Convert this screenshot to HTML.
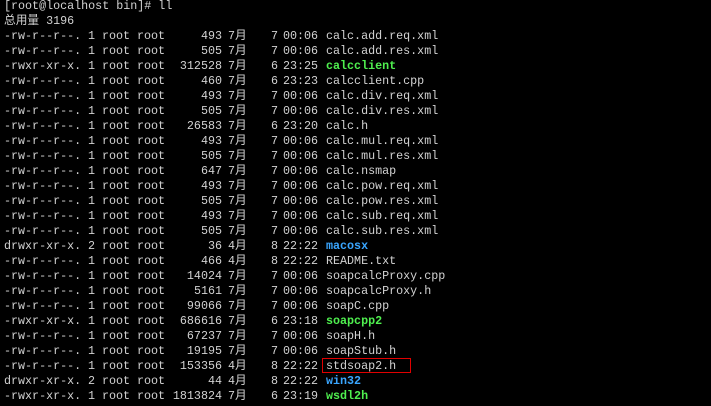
<!DOCTYPE html><html><head><meta charset="utf-8"><style>
body{margin:0;background:#000;width:711px;height:403px;overflow:hidden;position:relative;font-family:"Liberation Mono","Noto Sans CJK SC",monospace;font-size:11.7px;color:#d2d2d2}
.w{position:absolute;left:0;top:3px;width:711px;height:403px}
.r{position:absolute;left:0;height:15px;line-height:15px;width:711px;white-space:pre}
.r span{position:absolute;top:0}
.p{left:4px}.l{left:88px}.u{left:102px}.g{left:137px}
.s{right:489px;text-align:right}
.m{left:228px}.d{right:433px}.t{left:283px}.n{left:326px}
.gr{color:#4ff04f;font-weight:bold}.bl{color:#3aa6ff;font-weight:bold}
.box{position:absolute;left:322px;top:355px;width:87px;height:13px;border:1px solid #e00000}
</style></head><body><div class="w">
<div class="r" style="top:-4px"><span class="p">[root@localhost bin]# ll</span></div>
<div class="r" style="top:11px"><span class="p">总用量 3196</span></div>
<div class="r" style="top:26px"><span class="p">-rw-r--r--.</span><span class="l">1</span><span class="u">root</span><span class="g">root</span><span class="s">493</span><span class="m">7月</span><span class="d">7</span><span class="t">00:06</span><span class="n">calc.add.req.xml</span></div>
<div class="r" style="top:41px"><span class="p">-rw-r--r--.</span><span class="l">1</span><span class="u">root</span><span class="g">root</span><span class="s">505</span><span class="m">7月</span><span class="d">7</span><span class="t">00:06</span><span class="n">calc.add.res.xml</span></div>
<div class="r" style="top:56px"><span class="p">-rwxr-xr-x.</span><span class="l">1</span><span class="u">root</span><span class="g">root</span><span class="s">312528</span><span class="m">7月</span><span class="d">6</span><span class="t">23:25</span><span class="n gr">calcclient</span></div>
<div class="r" style="top:71px"><span class="p">-rw-r--r--.</span><span class="l">1</span><span class="u">root</span><span class="g">root</span><span class="s">460</span><span class="m">7月</span><span class="d">6</span><span class="t">23:23</span><span class="n">calcclient.cpp</span></div>
<div class="r" style="top:86px"><span class="p">-rw-r--r--.</span><span class="l">1</span><span class="u">root</span><span class="g">root</span><span class="s">493</span><span class="m">7月</span><span class="d">7</span><span class="t">00:06</span><span class="n">calc.div.req.xml</span></div>
<div class="r" style="top:101px"><span class="p">-rw-r--r--.</span><span class="l">1</span><span class="u">root</span><span class="g">root</span><span class="s">505</span><span class="m">7月</span><span class="d">7</span><span class="t">00:06</span><span class="n">calc.div.res.xml</span></div>
<div class="r" style="top:116px"><span class="p">-rw-r--r--.</span><span class="l">1</span><span class="u">root</span><span class="g">root</span><span class="s">26583</span><span class="m">7月</span><span class="d">6</span><span class="t">23:20</span><span class="n">calc.h</span></div>
<div class="r" style="top:131px"><span class="p">-rw-r--r--.</span><span class="l">1</span><span class="u">root</span><span class="g">root</span><span class="s">493</span><span class="m">7月</span><span class="d">7</span><span class="t">00:06</span><span class="n">calc.mul.req.xml</span></div>
<div class="r" style="top:146px"><span class="p">-rw-r--r--.</span><span class="l">1</span><span class="u">root</span><span class="g">root</span><span class="s">505</span><span class="m">7月</span><span class="d">7</span><span class="t">00:06</span><span class="n">calc.mul.res.xml</span></div>
<div class="r" style="top:161px"><span class="p">-rw-r--r--.</span><span class="l">1</span><span class="u">root</span><span class="g">root</span><span class="s">647</span><span class="m">7月</span><span class="d">7</span><span class="t">00:06</span><span class="n">calc.nsmap</span></div>
<div class="r" style="top:176px"><span class="p">-rw-r--r--.</span><span class="l">1</span><span class="u">root</span><span class="g">root</span><span class="s">493</span><span class="m">7月</span><span class="d">7</span><span class="t">00:06</span><span class="n">calc.pow.req.xml</span></div>
<div class="r" style="top:191px"><span class="p">-rw-r--r--.</span><span class="l">1</span><span class="u">root</span><span class="g">root</span><span class="s">505</span><span class="m">7月</span><span class="d">7</span><span class="t">00:06</span><span class="n">calc.pow.res.xml</span></div>
<div class="r" style="top:206px"><span class="p">-rw-r--r--.</span><span class="l">1</span><span class="u">root</span><span class="g">root</span><span class="s">493</span><span class="m">7月</span><span class="d">7</span><span class="t">00:06</span><span class="n">calc.sub.req.xml</span></div>
<div class="r" style="top:221px"><span class="p">-rw-r--r--.</span><span class="l">1</span><span class="u">root</span><span class="g">root</span><span class="s">505</span><span class="m">7月</span><span class="d">7</span><span class="t">00:06</span><span class="n">calc.sub.res.xml</span></div>
<div class="r" style="top:236px"><span class="p">drwxr-xr-x.</span><span class="l">2</span><span class="u">root</span><span class="g">root</span><span class="s">36</span><span class="m">4月</span><span class="d">8</span><span class="t">22:22</span><span class="n bl">macosx</span></div>
<div class="r" style="top:251px"><span class="p">-rw-r--r--.</span><span class="l">1</span><span class="u">root</span><span class="g">root</span><span class="s">466</span><span class="m">4月</span><span class="d">8</span><span class="t">22:22</span><span class="n">README.txt</span></div>
<div class="r" style="top:266px"><span class="p">-rw-r--r--.</span><span class="l">1</span><span class="u">root</span><span class="g">root</span><span class="s">14024</span><span class="m">7月</span><span class="d">7</span><span class="t">00:06</span><span class="n">soapcalcProxy.cpp</span></div>
<div class="r" style="top:281px"><span class="p">-rw-r--r--.</span><span class="l">1</span><span class="u">root</span><span class="g">root</span><span class="s">5161</span><span class="m">7月</span><span class="d">7</span><span class="t">00:06</span><span class="n">soapcalcProxy.h</span></div>
<div class="r" style="top:296px"><span class="p">-rw-r--r--.</span><span class="l">1</span><span class="u">root</span><span class="g">root</span><span class="s">99066</span><span class="m">7月</span><span class="d">7</span><span class="t">00:06</span><span class="n">soapC.cpp</span></div>
<div class="r" style="top:311px"><span class="p">-rwxr-xr-x.</span><span class="l">1</span><span class="u">root</span><span class="g">root</span><span class="s">686616</span><span class="m">7月</span><span class="d">6</span><span class="t">23:18</span><span class="n gr">soapcpp2</span></div>
<div class="r" style="top:326px"><span class="p">-rw-r--r--.</span><span class="l">1</span><span class="u">root</span><span class="g">root</span><span class="s">67237</span><span class="m">7月</span><span class="d">7</span><span class="t">00:06</span><span class="n">soapH.h</span></div>
<div class="r" style="top:341px"><span class="p">-rw-r--r--.</span><span class="l">1</span><span class="u">root</span><span class="g">root</span><span class="s">19195</span><span class="m">7月</span><span class="d">7</span><span class="t">00:06</span><span class="n">soapStub.h</span></div>
<div class="r" style="top:356px"><span class="p">-rw-r--r--.</span><span class="l">1</span><span class="u">root</span><span class="g">root</span><span class="s">153356</span><span class="m">4月</span><span class="d">8</span><span class="t">22:22</span><span class="n">stdsoap2.h</span></div>
<div class="r" style="top:371px"><span class="p">drwxr-xr-x.</span><span class="l">2</span><span class="u">root</span><span class="g">root</span><span class="s">44</span><span class="m">4月</span><span class="d">8</span><span class="t">22:22</span><span class="n bl">win32</span></div>
<div class="r" style="top:386px"><span class="p">-rwxr-xr-x.</span><span class="l">1</span><span class="u">root</span><span class="g">root</span><span class="s">1813824</span><span class="m">7月</span><span class="d">6</span><span class="t">23:19</span><span class="n gr">wsdl2h</span></div>
<div class="box"></div>
</div></body></html>
